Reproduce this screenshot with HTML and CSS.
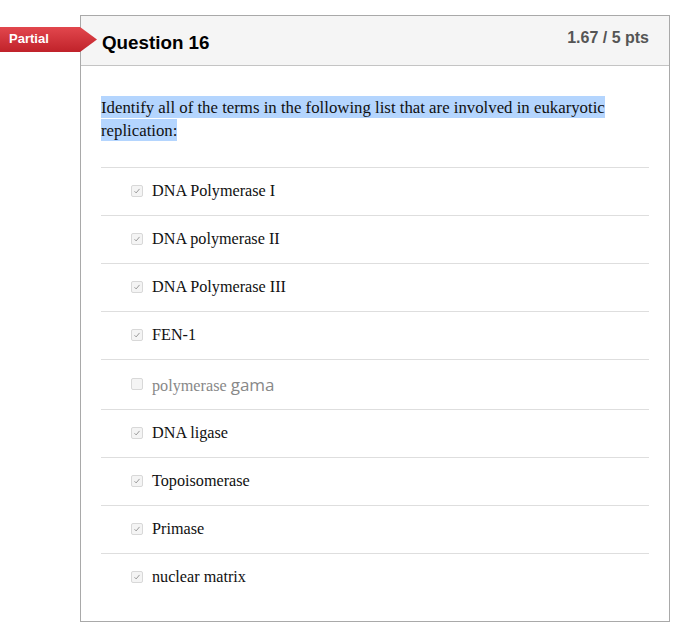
FILE: index.html
```html
<!DOCTYPE html>
<html>
<head>
<meta charset="utf-8">
<link rel="stylesheet" href="styles.css">
</head>
<body>
<div class="page">
  <div class="badge"><span>Partial</span></div>
  <div class="card">
    <div class="header">
      <h2 class="title">Question 16</h2>
      <div class="pts">1.67 / 5 pts</div>
    </div>
    <div class="body">
      <p class="question"><span class="sel">Identify all of the terms in the following list that are involved in eukaryotic replication:</span></p>
      <ul class="answers">
        <li><span class="cb on"><svg viewBox="0 0 12 12"><path d="M3 6.3 L5 8.3 L9 3.5" fill="none" stroke="#9a9a9a" stroke-width="1.2"/></svg></span><span class="label">DNA Polymerase I</span></li>
        <li><span class="cb on"><svg viewBox="0 0 12 12"><path d="M3 6.3 L5 8.3 L9 3.5" fill="none" stroke="#9a9a9a" stroke-width="1.2"/></svg></span><span class="label">DNA polymerase II</span></li>
        <li><span class="cb on"><svg viewBox="0 0 12 12"><path d="M3 6.3 L5 8.3 L9 3.5" fill="none" stroke="#9a9a9a" stroke-width="1.2"/></svg></span><span class="label">DNA Polymerase III</span></li>
        <li><span class="cb on"><svg viewBox="0 0 12 12"><path d="M3 6.3 L5 8.3 L9 3.5" fill="none" stroke="#9a9a9a" stroke-width="1.2"/></svg></span><span class="label">FEN-1</span></li>
        <li class="off"><span class="cb"></span><span class="label muted">polymerase <span class="sans">gama</span></span></li>
        <li><span class="cb on"><svg viewBox="0 0 12 12"><path d="M3 6.3 L5 8.3 L9 3.5" fill="none" stroke="#9a9a9a" stroke-width="1.2"/></svg></span><span class="label">DNA ligase</span></li>
        <li><span class="cb on"><svg viewBox="0 0 12 12"><path d="M3 6.3 L5 8.3 L9 3.5" fill="none" stroke="#9a9a9a" stroke-width="1.2"/></svg></span><span class="label">Topoisomerase</span></li>
        <li><span class="cb on"><svg viewBox="0 0 12 12"><path d="M3 6.3 L5 8.3 L9 3.5" fill="none" stroke="#9a9a9a" stroke-width="1.2"/></svg></span><span class="label">Primase</span></li>
        <li><span class="cb on"><svg viewBox="0 0 12 12"><path d="M3 6.3 L5 8.3 L9 3.5" fill="none" stroke="#9a9a9a" stroke-width="1.2"/></svg></span><span class="label">nuclear matrix</span></li>
      </ul>
    </div>
  </div>
</div>
</body>
</html>
```
FILE: styles.css
```css
html, body {
  margin: 0;
  padding: 0;
  background: #fff;
}
.page {
  position: relative;
  padding: 15px 0 0 80px;
  width: 590px;
}
.badge {
  position: absolute;
  left: 0;
  top: 27px;
  width: 97px;
  height: 25px;
  background: linear-gradient(#e2474d, #c0222a);
  clip-path: polygon(0 0, 80px 0, 97px 12.5px, 80px 25px, 0 25px);
}
.badge span {
  display: block;
  padding: 3px 0 0 9px;
  color: #fff;
  font: bold 13px/17px "Liberation Sans", Arial, sans-serif;
}
.card {
  border: 1px solid #a9a9a9;
  background: #fff;
}
.header {
  display: flex;
  justify-content: space-between;
  height: 49px;
  background: #f5f5f5;
  border-bottom: 1px solid #c4c4c4;
  padding: 0 20px 0 21px;
}
.title {
  margin: 0;
  padding-top: 16px;
  font: bold 18.8px/22px "Liberation Sans", Arial, sans-serif;
  color: #000;
}
.pts {
  padding-top: 12px;
  font: bold 16px/20px "Liberation Sans", Arial, sans-serif;
  color: #555;
}
.body {
  padding: 0 20px 20px 20px;
}
.question {
  margin: 30px 0 25px 0;
  font: 16.8px/23px "Liberation Serif", "Times New Roman", serif;
  color: #111;
  padding-right: 30px;
}
.sel {
  background: #b4d5fe;
  padding: 2px 0 1px;
}
.answers {
  list-style: none;
  margin: 0;
  padding: 0;
}
.answers li {
  display: flex;
  align-items: center;
  height: 47px;
  border-top: 1px solid #dedede;
  padding-left: 30px;
  font: 16.2px/20px "Liberation Serif", "Times New Roman", serif;
  color: #111;
}
.answers li.off {
  height: 49px;
}
.cb {
  width: 10px;
  height: 10px;
  border: 1px solid #d8d8d8;
  border-radius: 2px;
  background: #f4f4f4;
  margin-right: 9px;
  margin-top: -1px;
  display: flex;
}
.cb svg {
  width: 10px;
  height: 10px;
}
.label {
  margin-top: -1px;
}
.label.muted {
  color: #888;
}
.sans {
  font: 17px "Open Sans", "Noto Sans", sans-serif;
  color: #888;
}
```
